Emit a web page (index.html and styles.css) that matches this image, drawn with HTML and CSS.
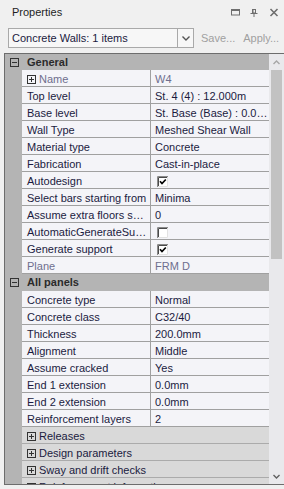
FILE: index.html
```html
<!DOCTYPE html>
<html>
<head>
<meta charset="utf-8">
<link rel="stylesheet" href="styles.css">
</head>
<body>
<div class="panel">
  <div class="titlebar">
    <span class="title">Properties</span>
    <svg class="win-icons" width="50" height="24" viewBox="0 0 50 24">
      <g fill="none" stroke="#6e6e6e" stroke-width="1">
        <rect x="1.5" y="9.5" width="8" height="5.5"/>
        <path d="M1.5 10.5h8"/>
        <rect x="22.5" y="9.5" width="3" height="3.5"/>
        <path d="M23 9.5v4"/>
        <path d="M20.5 13.5h7"/>
        <path d="M24 13.5v3.5"/>
        <path d="M40.5 9l7 7M47.5 9l-7 7" stroke-width="1.6"/>
      </g>
    </svg>
  </div>
  <div class="toolbar">
    <div class="combo">
      <span class="combo-text">Concrete Walls: 1 items</span>
      <span class="combo-btn">
        <svg width="8" height="5" viewBox="0 0 8 5"><path d="M0.5 0.5l3.5 3.5l3.5-3.5" fill="none" stroke="#555" stroke-width="1.4"/></svg>
      </span>
    </div>
    <span class="link link-save">Save...</span>
    <span class="link link-apply">Apply...</span>
  </div>
  <div class="grid">
    <div class="rows">
      <div class="group group-first">
        <svg class="exp" width="9" height="9" viewBox="0 0 9 9"><rect x="0.5" y="0.5" width="8" height="8" fill="none" stroke="#333"/><path d="M2 4.5h5" stroke="#333"/></svg>
        <span>General</span>
      </div>
      <div class="row"><div class="label dim"><svg class="exp-inline" width="9" height="9" viewBox="0 0 9 9"><rect x="0.5" y="0.5" width="8" height="8" fill="none" stroke="#333"/><path d="M2 4.5h5M4.5 2v5" stroke="#333"/></svg>Name</div><div class="value dim">W4</div></div>
      <div class="row"><div class="label">Top level</div><div class="value">St. 4 (4) : 12.000m</div></div>
      <div class="row"><div class="label">Base level</div><div class="value">St. Base (Base) : 0.0…</div></div>
      <div class="row"><div class="label">Wall Type</div><div class="value">Meshed Shear Wall</div></div>
      <div class="row"><div class="label">Material type</div><div class="value">Concrete</div></div>
      <div class="row"><div class="label">Fabrication</div><div class="value">Cast-in-place</div></div>
      <div class="row"><div class="label">Autodesign</div><div class="value"><svg class="check" width="11" height="11" viewBox="0 0 11 11"><rect width="11" height="11" fill="#fff"/><path d="M10.5 0v10.5H0" fill="none" stroke="#e2e2e2"/><path d="M0.5 11V0.5H11" fill="none" stroke="#8a8a8a"/><path d="M1.5 10V1.5H10" fill="none" stroke="#4a4a4a"/><path d="M3 5.3l2 2.2l3.8-4" fill="none" stroke="#000" stroke-width="1.7"/></svg></div></div>
      <div class="row"><div class="label">Select bars starting from</div><div class="value">Minima</div></div>
      <div class="row"><div class="label">Assume extra floors s…</div><div class="value">0</div></div>
      <div class="row"><div class="label">AutomaticGenerateSu…</div><div class="value"><svg class="check" width="11" height="11" viewBox="0 0 11 11"><rect width="11" height="11" fill="#fff"/><path d="M10.5 0v10.5H0" fill="none" stroke="#e2e2e2"/><path d="M0.5 11V0.5H11" fill="none" stroke="#8a8a8a"/><path d="M1.5 10V1.5H10" fill="none" stroke="#4a4a4a"/></svg></div></div>
      <div class="row"><div class="label">Generate support</div><div class="value"><svg class="check" width="11" height="11" viewBox="0 0 11 11"><rect width="11" height="11" fill="#fff"/><path d="M10.5 0v10.5H0" fill="none" stroke="#e2e2e2"/><path d="M0.5 11V0.5H11" fill="none" stroke="#8a8a8a"/><path d="M1.5 10V1.5H10" fill="none" stroke="#4a4a4a"/><path d="M3 5.3l2 2.2l3.8-4" fill="none" stroke="#000" stroke-width="1.7"/></svg></div></div>
      <div class="row"><div class="label dim">Plane</div><div class="value dim">FRM D</div></div>
      <div class="group">
        <svg class="exp" width="9" height="9" viewBox="0 0 9 9"><rect x="0.5" y="0.5" width="8" height="8" fill="none" stroke="#333"/><path d="M2 4.5h5" stroke="#333"/></svg>
        <span>All panels</span>
      </div>
      <div class="row"><div class="label">Concrete type</div><div class="value">Normal</div></div>
      <div class="row"><div class="label">Concrete class</div><div class="value">C32/40</div></div>
      <div class="row"><div class="label">Thickness</div><div class="value">200.0mm</div></div>
      <div class="row"><div class="label">Alignment</div><div class="value">Middle</div></div>
      <div class="row"><div class="label">Assume cracked</div><div class="value">Yes</div></div>
      <div class="row"><div class="label">End 1 extension</div><div class="value">0.0mm</div></div>
      <div class="row"><div class="label">End 2 extension</div><div class="value">0.0mm</div></div>
      <div class="row"><div class="label">Reinforcement layers</div><div class="value">2</div></div>
      <div class="row sub"><div class="sub-label"><svg class="exp-inline" width="9" height="9" viewBox="0 0 9 9"><rect x="0.5" y="0.5" width="8" height="8" fill="none" stroke="#333"/><path d="M2 4.5h5M4.5 2v5" stroke="#333"/></svg>Releases</div></div>
      <div class="row sub"><div class="sub-label"><svg class="exp-inline" width="9" height="9" viewBox="0 0 9 9"><rect x="0.5" y="0.5" width="8" height="8" fill="none" stroke="#333"/><path d="M2 4.5h5M4.5 2v5" stroke="#333"/></svg>Design parameters</div></div>
      <div class="row sub"><div class="sub-label"><svg class="exp-inline" width="9" height="9" viewBox="0 0 9 9"><rect x="0.5" y="0.5" width="8" height="8" fill="none" stroke="#333"/><path d="M2 4.5h5M4.5 2v5" stroke="#333"/></svg>Sway and drift checks</div></div>
      <div class="row sub"><div class="sub-label"><svg class="exp-inline" width="9" height="9" viewBox="0 0 9 9"><rect x="0.5" y="0.5" width="8" height="8" fill="none" stroke="#333"/><path d="M2 4.5h5M4.5 2v5" stroke="#333"/></svg>Reinforcement information</div></div>
    </div>
    <div class="scrollbar">
      <div class="sb-btn">
        <svg width="7" height="5" viewBox="0 0 7 5"><path d="M0.5 4l3-3l3 3" fill="none" stroke="#a6a6a6" stroke-width="1.4"/></svg>
      </div>
      <div class="sb-thumb"></div>
      <div class="sb-track"></div>
      <div class="sb-btn">
        <svg width="7" height="5" viewBox="0 0 7 5"><path d="M0.5 1l3 3l3-3" fill="none" stroke="#606060" stroke-width="1.4"/></svg>
      </div>
    </div>
  </div>
</div>
</body>
</html>
```

FILE: styles.css
```css
html, body {
  margin: 0;
  padding: 0;
}
body {
  width: 284px;
  height: 489px;
  overflow: hidden;
  background: #f0f0f0;
  font-family: "Liberation Sans", Arial, sans-serif;
  font-size: 11px;
  color: #1b1b3f;
}
.panel {
  width: 284px;
  height: 489px;
}
.titlebar {
  height: 24px;
  display: flex;
  align-items: center;
  padding-left: 12px;
}
.title {
  line-height: 24px;
  color: #1e1e1e;
}
.win-icons {
  display: block;
  margin-left: auto;
  margin-right: 4px;
}
.toolbar {
  display: flex;
  align-items: center;
  height: 20px;
  margin-top: 4px;
  padding-left: 8px;
}
.combo {
  width: 186px;
  height: 20px;
  box-sizing: border-box;
  border: 1px solid #a9a9a9;
  background: #f7f7f7;
  display: flex;
}
.combo-text {
  flex: 1;
  padding-left: 3px;
  line-height: 18px;
  white-space: nowrap;
  overflow: hidden;
}
.combo-btn {
  width: 15px;
  border-left: 1px solid #a9a9a9;
  display: flex;
  align-items: center;
  justify-content: center;
}
.combo-btn svg {
  display: block;
}
.link {
  color: #a0a0a0;
  line-height: 20px;
}
.link-save {
  margin-left: 7px;
}
.link-apply {
  margin-left: 8px;
}
.grid {
  margin: 5px 0 0 4px;
  width: 280px;
  height: 432px;
  box-sizing: border-box;
  border: 1px solid #6d6d6d;
  border-right: none;
  display: flex;
}
.rows {
  width: 264px;
  height: 430px;
  overflow: hidden;
  background: #b4b4b4;
}
.group {
  height: 17px;
  box-sizing: border-box;
  display: flex;
  align-items: center;
  padding-left: 5px;
  background: #b4b4b4;
  font-weight: bold;
  color: #2b2b2b;
  border-bottom: 1px solid #b4b4b4;
}
.group-first {
  height: 16px;
  border-bottom: none;
}
.exp {
  display: block;
  margin-right: 8px;
}
.row {
  margin-left: 17px;
  height: 17px;
  box-sizing: border-box;
  border-bottom: 1px solid #a0a0a0;
  background: #f4f4f8;
  display: flex;
}
.label, .value, .sub-label {
  height: 16px;
  box-sizing: border-box;
  padding-top: 1px;
  line-height: 16px;
  white-space: nowrap;
  overflow: hidden;
}
.label {
  width: 129px;
  border-right: 1px solid #a0a0a0;
  padding-left: 5px;
}
.value {
  flex: 1;
  padding-left: 4px;
}
.dim {
  color: #6e6e8e;
}
.exp-inline {
  vertical-align: -1px;
  margin-right: 3px;
}
.check {
  display: block;
  margin: 3px 0 0 2px;
}
.sub {
  background: #d9d9d9;
  border-bottom-color: #ababab;
}
.sub-label {
  flex: 1;
  padding-left: 5px;
}
.scrollbar {
  width: 15px;
  height: 430px;
  background: #e9e9ec;
  display: flex;
  flex-direction: column;
}
.sb-btn {
  height: 16px;
  display: flex;
  align-items: center;
  justify-content: center;
}
.sb-btn svg {
  display: block;
}
.sb-thumb {
  height: 189px;
  margin: 0 2px 0 2px;
  background: #c2c2c2;
}
.sb-track {
  flex: 1;
}
```
